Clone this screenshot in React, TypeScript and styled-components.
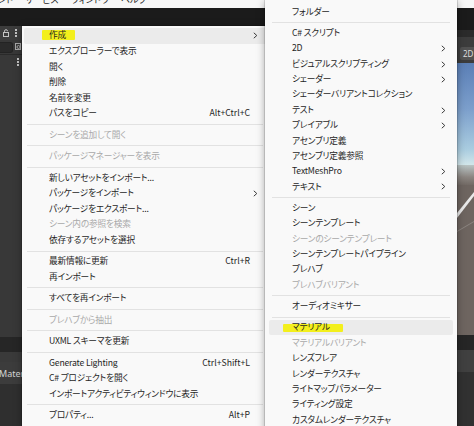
import React from 'react';
import styled, { createGlobalStyle } from 'styled-components';

const GlobalStyle = createGlobalStyle`
  html, body { margin: 0; padding: 0; background: #383838; }
  body {
    width: 474px; height: 426px; overflow: hidden;
    font-family: "Noto Sans CJK JP", "Noto Sans", sans-serif;
  }
  #root { width: 474px; height: 426px; }
`;

const Editor = styled.div`
  position: relative;
  width: 474px;
  height: 426px;
  overflow: hidden;
  display: flex;
  flex-direction: column;
  background: #383838;
`;

const MenuBar = styled.div`
  height: 8px;
  flex: none;
  background: #f7f7f7;
  display: flex;
  gap: 12px;
  overflow: hidden;
  color: #1e1e1e;
  font-size: 9px;
  font-feature-settings: "palt";
`;

const MenuBarItem = styled.span<{ $shift?: number }>`
  margin-top: -6px;
  margin-left: ${p => p.$shift ?? 0}px;
  line-height: 11px;
  white-space: nowrap;
  flex: none;
`;

const TitleStrip = styled.div`
  height: 18px;
  flex: none;
  background: #1b1b1b;
`;

const Workspace = styled.div`
  flex: 1;
  display: flex;
  min-height: 0;
`;

const LeftPanel = styled.div`
  width: 22px;
  flex: none;
  display: flex;
  flex-direction: column;
  overflow: hidden;
`;

const PanelToolbar = styled.div`
  height: 14px;
  flex: none;
  background: #3c3c3c;
  display: flex;
  align-items: center;
  padding-left: 3px;
  gap: 6px;
`;

const SearchRow = styled.div`
  height: 15px;
  flex: none;
  background: #383838;
  display: flex;
  align-items: center;
  gap: 2px;
  border-bottom: 1px solid #2a2a2a;
  box-sizing: border-box;
`;

const SearchField = styled.div`
  width: 13px;
  height: 11px;
  background: #2a2a2a;
  border-radius: 0 3px 3px 0;
  border: 1px solid #232323;
  border-left: none;
  box-sizing: border-box;
`;

const ListHeader = styled.div`
  height: 13px;
  flex: none;
  background: #383838;
  display: flex;
  align-items: center;
  justify-content: flex-end;
  padding-right: 3px;
`;

const PanelFill = styled.div<{ $h: number; $bg: string }>`
  height: ${p => p.$h}px;
  flex: none;
  background: ${p => p.$bg};
`;

const AssetRow = styled.div`
  height: 22px;
  flex: none;
  background: #3c3c3c;
  color: #d4d4d4;
  font-family: "Noto Sans", sans-serif;
  font-size: 9px;
  line-height: 24px;
  white-space: nowrap;
  margin-left: -1px;
`;

const PanelRest = styled.div`
  flex: 1;
  background: #2f2f2f;
`;

const Center = styled.div`
  flex: 1;
  background: #383838;
`;

const SceneView = styled.div`
  width: 17px;
  flex: none;
  display: flex;
  flex-direction: column;
  overflow: hidden;
`;

const SceneBand = styled.div<{ $h: number; $bg: string }>`
  height: ${p => p.$h}px;
  flex: none;
  background: ${p => p.$bg};
`;

const SceneToolbar = styled.div`
  height: 26px;
  flex: none;
  background: #3c3c3c;
  padding: 10px 0 0 3px;
  box-sizing: border-box;
`;

const ToggleButton = styled.div`
  height: 13px;
  width: 20px;
  background: #515151;
  border-radius: 2px;
  color: #dedede;
  font-family: "Noto Sans", sans-serif;
  font-size: 8px;
  line-height: 13px;
  padding-left: 3px;
  box-sizing: border-box;
`;

const Sky = styled.div`
  height: 102px;
  flex: none;
  background: linear-gradient(#5b7fb6 0%, #7c9fcc 45%, #aacde0 85%, #d2e6ea 100%);
`;

const Horizon = styled.div`
  height: 20px;
  flex: none;
  background: linear-gradient(#b9c4c4 0%, #8b8581 60%, #726a65 100%);
`;

const Ground = styled.div`
  height: 150px;
  flex: none;
  background: #6e6560;
`;

const GroundLines = styled.svg`
  display: block;
`;

const ContextMenu = styled.div<{ $left: number; $top: number; $width: number; $pad: number }>`
  position: absolute;
  left: ${p => p.$left}px;
  top: ${p => p.$top}px;
  width: ${p => p.$width}px;
  padding-top: ${p => p.$pad}px;
  padding-bottom: 4px;
  background: #f9f9f9;
  box-shadow: 0 0 0 1px rgba(0, 0, 0, 0.12), 0 2px 8px rgba(0, 0, 0, 0.35);
  font-size: 8.7px;
  letter-spacing: -0.2px;
  color: #1c1c1c;
  font-feature-settings: "palt";
  box-sizing: border-box;
`;

const Row = styled.div<{ $h: number; $inset: number; $pad: number; $hover?: boolean; $disabled?: boolean }>`
  height: ${p => p.$h}px;
  margin: 0 ${p => p.$inset}px;
  padding-left: ${p => p.$pad}px;
  display: flex;
  align-items: center;
  border-radius: 2px;
  background: ${p => (p.$hover ? '#ebebeb' : 'transparent')};
  color: ${p => (p.$disabled ? '#a9a9a9' : '#1f1f1f')};
  white-space: nowrap;
`;

const Label = styled.span`
  flex: 1;
  line-height: 1;
`;

const Marked = styled.span<{ $l: number; $r: number; $t: number; $mh: number }>`
  position: relative;
  z-index: 0;
  &::before {
    content: '';
    position: absolute;
    z-index: -1;
    left: -${p => p.$l}px;
    right: -${p => p.$r}px;
    top: calc(50% + ${p => p.$t}px);
    height: ${p => p.$mh}px;
    background: #f3ef1c;
    border-radius: 1px;
  }
`;

const Shortcut = styled.span`
  line-height: 1;
  letter-spacing: 0;
`;

const ArrowSlot = styled.span<{ $w: number; $off: number }>`
  width: ${p => p.$w}px;
  flex: none;
  display: flex;
  align-items: center;
  padding-left: ${p => p.$off}px;
  box-sizing: border-box;
`;

const Separator = styled.div<{ $h: number; $l: number; $r: number }>`
  height: ${p => p.$h}px;
  display: flex;
  align-items: center;
  padding: 0 ${p => p.$r}px 0 ${p => p.$l}px;
  &::after {
    content: '';
    flex: 1;
    height: 1px;
    background: #e2e2e2;
  }
`;

type Mark = { l: number; r: number; t: number; h: number };
type Item = {
  label: string;
  shortcut?: string;
  sub?: boolean;
  disabled?: boolean;
  hover?: boolean;
  mark?: Mark;
};
type Entry = Item | 'sep';

const SEP: Entry = 'sep';

const mainItems: Entry[] = [
  { label: '作成', sub: true, hover: true, mark: { l: 7, r: 9, t: -5, h: 10 } },
  { label: 'エクスプローラーで表示' },
  { label: '開く' },
  { label: '削除' },
  { label: '名前を変更' },
  { label: 'パスをコピー', shortcut: 'Alt+Ctrl+C' },
  SEP,
  { label: 'シーンを追加して開く', disabled: true },
  SEP,
  { label: 'パッケージマネージャーを表示', disabled: true },
  SEP,
  { label: '新しいアセットをインポート...' },
  { label: 'パッケージをインポート', sub: true },
  { label: 'パッケージをエクスポート...' },
  { label: 'シーン内の参照を検索', disabled: true },
  { label: '依存するアセットを選択' },
  SEP,
  { label: '最新情報に更新', shortcut: 'Ctrl+R' },
  { label: '再インポート' },
  SEP,
  { label: 'すべてを再インポート' },
  SEP,
  { label: 'プレハブから抽出', disabled: true },
  SEP,
  { label: 'UXML スキーマを更新' },
  SEP,
  { label: 'Generate Lighting', shortcut: 'Ctrl+Shift+L' },
  { label: 'C# プロジェクトを開く' },
  { label: 'インポートアクティビティウィンドウに表示' },
  SEP,
  { label: 'プロパティ...', shortcut: 'Alt+P' },
];

const subItems: Entry[] = [
  { label: 'フォルダー' },
  SEP,
  { label: 'C# スクリプト' },
  { label: '2D', sub: true },
  { label: 'ビジュアルスクリプティング', sub: true },
  { label: 'シェーダー', sub: true },
  { label: 'シェーダーバリアントコレクション' },
  { label: 'テスト', sub: true },
  { label: 'プレイアブル', sub: true },
  { label: 'アセンブリ定義' },
  { label: 'アセンブリ定義参照' },
  { label: 'TextMeshPro', sub: true },
  { label: 'テキスト', sub: true },
  SEP,
  { label: 'シーン' },
  { label: 'シーンテンプレート' },
  { label: 'シーンのシーンテンプレート', disabled: true },
  { label: 'シーンテンプレートパイプライン' },
  { label: 'プレハブ' },
  { label: 'プレハブバリアント', disabled: true },
  SEP,
  { label: 'オーディオミキサー' },
  SEP,
  { label: 'マテリアル', hover: true, mark: { l: 9, r: 13, t: -3, h: 8 } },
  { label: 'マテリアルバリアント', disabled: true },
  { label: 'レンズフレア' },
  { label: 'レンダーテクスチャ' },
  { label: 'ライトマップパラメーター' },
  { label: 'ライティング設定' },
  { label: 'カスタムレンダーテクスチャ' },
];

const Chevron = () => (
  <svg width="5" height="7" viewBox="0 0 5 7">
    <polyline points="0.8,0.8 3.8,3.5 0.8,6.2" fill="none" stroke="#3a3a3a" strokeWidth="1" />
  </svg>
);

const Kebab = () => (
  <svg width="2" height="8" viewBox="0 0 2 8">
    <rect x="0" y="0" width="2" height="2" fill="#c4c4c4" />
    <rect x="0" y="3" width="2" height="2" fill="#c4c4c4" />
    <rect x="0" y="6" width="2" height="2" fill="#c4c4c4" />
  </svg>
);

const LockIcon = () => (
  <svg width="6" height="8" viewBox="0 0 6 8">
    <path d="M1.5 3.5 V2.2 A1.5 1.5 0 0 1 4.5 2.2" fill="none" stroke="#c4c4c4" strokeWidth="1" />
    <rect x="0.5" y="3.5" width="5" height="4" fill="none" stroke="#c4c4c4" strokeWidth="1" />
  </svg>
);

const SearchGlyph = () => (
  <svg width="7" height="8" viewBox="0 0 7 8">
    <rect x="0.5" y="0.5" width="5" height="6" fill="none" stroke="#a8a8a8" strokeWidth="1" />
    <circle cx="3.5" cy="4" r="1.5" fill="none" stroke="#a8a8a8" strokeWidth="1" />
  </svg>
);

type MenuGeom = {
  left: number;
  top: number;
  width: number;
  pad: number;
  rowH: number;
  sepH: number;
  inset: number;
  textPad: number;
  arrowW: number;
  arrowOff: number;
  sepL: number;
  sepR: number;
};

const Menu = ({ items, g }: { items: Entry[]; g: MenuGeom }) => (
  <ContextMenu $left={g.left} $top={g.top} $width={g.width} $pad={g.pad}>
    {items.map((it, i) =>
      it === 'sep' ? (
        <Separator key={i} $h={g.sepH} $l={g.sepL} $r={g.sepR} />
      ) : (
        <Row key={i} $h={g.rowH} $inset={g.inset} $pad={g.textPad} $hover={it.hover} $disabled={it.disabled}>
          <Label>
            {it.mark ? (
              <Marked $l={it.mark.l} $r={it.mark.r} $t={it.mark.t} $mh={it.mark.h}>
                {it.label}
              </Marked>
            ) : (
              it.label
            )}
          </Label>
          {it.shortcut && <Shortcut>{it.shortcut}</Shortcut>}
          <ArrowSlot $w={g.arrowW} $off={g.arrowOff}>{it.sub && <Chevron />}</ArrowSlot>
        </Row>
      )
    )}
  </ContextMenu>
);

const mainGeom: MenuGeom = {
  left: 22,
  top: 26,
  width: 247,
  pad: 2,
  rowH: 15.6,
  sepH: 5.8,
  inset: 2,
  textPad: 25,
  arrowW: 17,
  arrowOff: 3,
  sepL: 5,
  sepR: 6,
};

const subGeom: MenuGeom = {
  left: 265,
  top: 0,
  width: 192,
  pad: 4.3,
  rowH: 15.36,
  sepH: 6,
  inset: 4,
  textPad: 23,
  arrowW: 12,
  arrowOff: 0,
  sepL: 7,
  sepR: 7,
};

export default function App() {
  return (
    <>
      <GlobalStyle />
      <Editor>
        <MenuBar>
          <MenuBarItem $shift={-2}>ント</MenuBarItem>
          <MenuBarItem>サービス</MenuBarItem>
          <MenuBarItem>ウィンドウ</MenuBarItem>
          <MenuBarItem>ヘルプ</MenuBarItem>
        </MenuBar>
        <TitleStrip />
        <Workspace>
          <LeftPanel>
            <PanelToolbar>
              <LockIcon />
              <Kebab />
            </PanelToolbar>
            <SearchRow>
              <SearchField />
              <SearchGlyph />
            </SearchRow>
            <ListHeader>
              <Kebab />
            </ListHeader>
            <PanelFill $h={269} $bg="#383838" />
            <PanelFill $h={15} $bg="#262626" />
            <PanelFill $h={10} $bg="#3a3a3a" />
            <AssetRow>Material</AssetRow>
            <PanelRest />
          </LeftPanel>
          <Center />
          <SceneView>
            <SceneBand $h={4} $bg="#1b1b1b" />
            <SceneBand $h={7} $bg="#2b2b2b" />
            <SceneToolbar>
              <ToggleButton>2D</ToggleButton>
            </SceneToolbar>
            <Sky />
            <Horizon />
            <Ground>
              <GroundLines width="17" height="150" viewBox="0 0 17 150">
                <polygon points="0,28 17,7 17,11 0,33" fill="#e9e9e9" />
                <polygon points="0,46 17,36 17,37 0,47" fill="#8c8580" />
              </GroundLines>
            </Ground>
            <SceneBand $h={15} $bg="#262626" />
            <SceneBand $h={22} $bg="#404040" />
            <SceneBand $h={60} $bg="#313131" />
          </SceneView>
        </Workspace>
        <Menu items={mainItems} g={mainGeom} />
        <Menu items={subItems} g={subGeom} />
      </Editor>
    </>
  );
}
